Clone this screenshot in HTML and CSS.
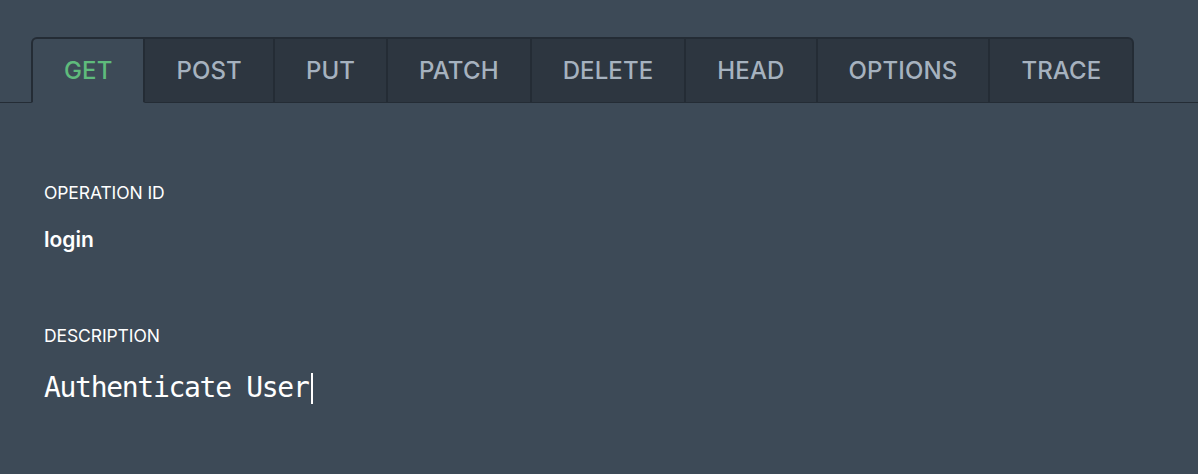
FILE: index.html
```html
<!DOCTYPE html>
<html>
<head>
<meta charset="utf-8">
<link rel="stylesheet" href="styles.css">
</head>
<body>
<div class="page">
  <div class="tabbar">
    <div class="tab active">GET</div>
    <div class="tab">POST</div>
    <div class="tab">PUT</div>
    <div class="tab">PATCH</div>
    <div class="tab">DELETE</div>
    <div class="tab">HEAD</div>
    <div class="tab">OPTIONS</div>
    <div class="tab last">TRACE</div>
  </div>
  <div class="content">
    <div class="field">
      <div class="label">OPERATION ID</div>
      <div class="value">login</div>
    </div>
    <div class="field">
      <div class="label">DESCRIPTION</div>
      <div class="desc">Authenticate User<span class="caret"></span></div>
    </div>
  </div>
</div>
</body>
</html>
```

FILE: styles.css
```css
html, body {
  margin: 0;
  padding: 0;
  background: #3d4a57;
}
body {
  font-family: Inter, "Noto Sans", sans-serif;
  color: #ffffff;
}
.page {
  padding-top: 37px;
  height: 474px;
  box-sizing: border-box;
}
.tabbar {
  display: flex;
  padding-left: 31px;
  border-bottom: 1px solid #242c35;
  height: 65px;
}
.tab {
  box-sizing: border-box;
  height: 66px;
  padding: 0 31px;
  display: flex;
  align-items: center;
  justify-content: center;
  font-size: 24px;
  font-weight: 500;
  letter-spacing: 0.12px;
  color: #a6b2bf;
  background: #2d3640;
  border-top: 2px solid #242c35;
  border-right: 2px solid #242c35;
  border-bottom: 1px solid #242c35;
  margin-bottom: -1px;
}
.tab.active {
  background: #3d4a57;
  color: #5fbb7c;
  border-left: 2px solid #242c35;
  border-bottom-color: #3d4a57;
  border-top-left-radius: 6px;
}
.tab.last {
  border-top-right-radius: 6px;
}
.content {
  padding: 80px 44px 0;
}
.field {
  margin-bottom: 74px;
}
.label {
  font-size: 17.5px;
  line-height: 20px;
  color: #ffffff;
  letter-spacing: -0.1px;
}
.value {
  margin-top: 25px;
  font-size: 21px;
  font-weight: 600;
  line-height: 24px;
}
.desc {
  margin-top: 25px;
  font-family: "DejaVu Sans Mono", monospace;
  font-size: 28px;
  letter-spacing: -1.3px;
  line-height: 34px;
  display: flex;
  align-items: center;
}
.caret {
  display: inline-block;
  width: 2px;
  height: 31px;
  margin-left: 3px;
  background: #ffffff;
}
```
